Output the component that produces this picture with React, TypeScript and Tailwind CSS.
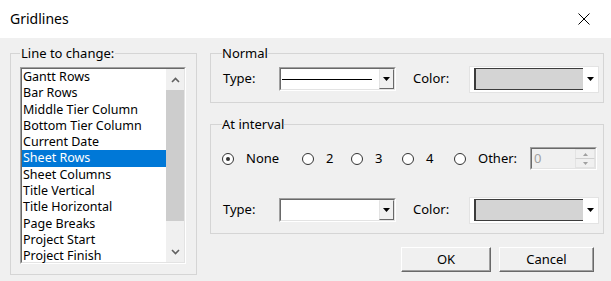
import React from "react";

const items = [
  "Gantt Rows",
  "Bar Rows",
  "Middle Tier Column",
  "Bottom Tier Column",
  "Current Date",
  "Sheet Rows",
  "Sheet Columns",
  "Title Vertical",
  "Title Horizontal",
  "Page Breaks",
  "Project Start",
  "Project Finish",
];

function DownTri({ color = "#000" }: { color?: string }) {
  return (
    <svg width="7" height="4" viewBox="0 0 7 4">
      <polygon points="0,0 7,0 3.5,4" fill={color} />
    </svg>
  );
}

function TypeCombo({ line }: { line?: boolean }) {
  return (
    <div className="w-[117px] h-[24px] border border-t-[#a0a0a0] border-l-[#a0a0a0] border-r-white border-b-white">
      <div className="h-full flex border border-t-[#696969] border-l-[#696969] border-r-[#e3e3e3] border-b-[#e3e3e3]">
        <div className="flex-1 bg-white flex items-center pl-[1px] pr-[7px]">
          {line && <div className="w-full h-px bg-black" />}
        </div>
        <div className="w-[15px] bg-[#f0f0f0] flex items-center justify-center border border-t-[#f0f0f0] border-l-[#e3e3e3] border-r-[#696969] border-b-[#696969]">
          <DownTri />
        </div>
      </div>
    </div>
  );
}

function ColorCombo() {
  return (
    <div className="w-[130px] h-[27px] bg-white border border-[#e3e3e3] flex items-center">
      <div className="ml-[4px] w-[109px] h-[22px] bg-[#d4d4d4] border-t border-b border-l-2 border-[#3c3c3c]" />
      <div className="flex-1 flex items-center justify-center">
        <DownTri />
      </div>
    </div>
  );
}

function Radio({ label, checked, w }: { label: string; checked?: boolean; w: string }) {
  return (
    <div className={`${w} flex items-center gap-[12px]`}>
      <div className="w-[12px] h-[12px] rounded-full border border-[#333] bg-white flex items-center justify-center">
        {checked && <div className="w-[4px] h-[4px] rounded-full bg-[#333]" />}
      </div>
      <span>{label}</span>
    </div>
  );
}

function Chevron({ up }: { up?: boolean }) {
  return (
    <svg width="9" height="6" viewBox="0 0 9 6">
      <polyline
        points={up ? "1,5 4.5,1.5 8,5" : "1,1 4.5,4.5 8,1"}
        fill="none"
        stroke="#606060"
        strokeWidth="1.6"
      />
    </svg>
  );
}

export default function App() {
  return (
    <div className="w-[611px] h-[281px] flex flex-col bg-[#f0f0f0] font-['Noto_Sans',sans-serif] text-black overflow-hidden">
      <div className="h-[38px] shrink-0 bg-white flex items-center justify-between pl-[10px] pr-[21px]">
        <span className="text-[14px] leading-[20px]">Gridlines</span>
        <svg width="12" height="12" viewBox="0 0 12 12">
          <line x1="0.5" y1="0.5" x2="11.5" y2="11.5" stroke="#000" strokeWidth="1" />
          <line x1="11.5" y1="0.5" x2="0.5" y2="11.5" stroke="#000" strokeWidth="1" />
        </svg>
      </div>

      <div className="flex pl-[10px] pt-[7px] gap-[13px] text-[13px]">
        <fieldset className="w-[187px] border border-[#d5d5d5] px-[9px] pb-[10px]">
          <legend className="leading-[16px] px-[1px]">Line to change:</legend>
          <div className="mt-[6px] w-[166px] h-[197px] border border-t-[#a0a0a0] border-l-[#a0a0a0] border-r-white border-b-white">
            <div className="h-full flex border border-t-[#696969] border-l-[#696969] border-r-[#e3e3e3] border-b-[#e3e3e3] bg-white">
              <div className="flex-1 text-[12.5px]">
                {items.map((it) => (
                  <div
                    key={it}
                    className={`h-[16.3px] leading-[16.3px] pl-[1px] whitespace-nowrap ${
                      it === "Sheet Rows" ? "bg-[#0078d7] text-white" : ""
                    }`}
                  >
                    {it}
                  </div>
                ))}
              </div>
              <div className="w-[18px] flex flex-col bg-[#f0f0f0]">
                <div className="h-[21px] flex items-center justify-center">
                  <Chevron up />
                </div>
                <div className="h-[131px] bg-[#cdcdcd]" />
                <div className="flex-1" />
                <div className="h-[21px] flex items-center justify-center">
                  <Chevron />
                </div>
              </div>
            </div>
          </div>
        </fieldset>

        <div className="w-[394px] flex flex-col">
          <fieldset className="border border-[#d5d5d5] pl-[11px] pr-[3px] pb-[10px]">
            <legend className="leading-[16px]">Normal</legend>
            <div className="mt-[5px] h-[26px] flex items-center">
              <span className="w-[57px] pl-[1px]">Type:</span>
              <TypeCombo line />
              <span className="ml-[17px] w-[56px]">Color:</span>
              <ColorCombo />
            </div>
          </fieldset>

          <fieldset className="mt-[13px] border border-[#d5d5d5] pl-[11px] pr-[3px] pb-[10px]">
            <legend className="leading-[16px]">At interval</legend>
            <div className="mt-[15px] h-[23px] flex items-center">
              <Radio label="None" checked w="w-[80px]" />
              <Radio label="2" w="w-[49px]" />
              <Radio label="3" w="w-[51px]" />
              <Radio label="4" w="w-[52px]" />
              <Radio label="Other:" w="w-[76px]" />
              <div className="w-[67px] h-[23px] border border-t-[#a0a0a0] border-l-[#a0a0a0] border-r-white border-b-white">
                <div className="h-full flex border border-t-[#696969] border-l-[#696969] border-r-[#e3e3e3] border-b-[#e3e3e3] bg-[#f0f0f0]">
                  <div className="flex-1 flex items-center pl-[2px] text-[#a0a0a0]">0</div>
                  <div className="w-[20px] flex flex-col">
                    <div className="flex-1 flex items-center justify-center border border-[#e3e3e3] border-b-[#d0d0d0]">
                      <svg width="5" height="3" viewBox="0 0 5 3">
                        <polygon points="0,3 5,3 2.5,0" fill="#a0a0a0" />
                      </svg>
                    </div>
                    <div className="flex-1 flex items-center justify-center border border-[#e3e3e3] border-t-0">
                      <svg width="5" height="3" viewBox="0 0 5 3">
                        <polygon points="0,0 5,0 2.5,3" fill="#a0a0a0" />
                      </svg>
                    </div>
                  </div>
                </div>
              </div>
            </div>
            <div className="mt-[27px] h-[26px] flex items-center">
              <span className="w-[57px] pl-[1px]">Type:</span>
              <TypeCombo />
              <span className="ml-[17px] w-[56px]">Color:</span>
              <ColorCombo />
            </div>
          </fieldset>

          <div className="mt-[13px] flex justify-end gap-[8px] pr-[10px]">
            <button className="w-[90px] h-[25px] bg-[#f0f0f0] border border-t-white border-l-white border-r-[#696969] border-b-[#696969] shadow-[inset_-1px_-1px_0_#a0a0a0]">
              OK
            </button>
            <button className="w-[95px] h-[25px] bg-[#f0f0f0] border border-t-white border-l-white border-r-[#696969] border-b-[#696969] shadow-[inset_-1px_-1px_0_#a0a0a0]">
              Cancel
            </button>
          </div>
        </div>
      </div>
    </div>
  );
}
